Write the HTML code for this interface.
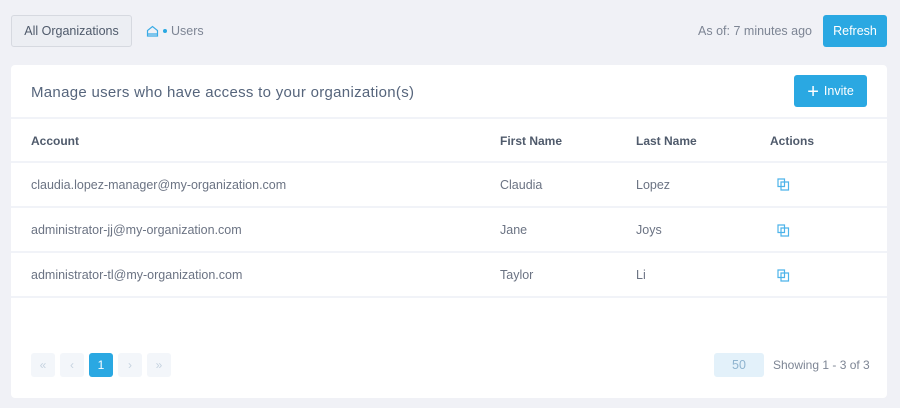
<!DOCTYPE html>
<html><head><style>
*{box-sizing:border-box;margin:0;padding:0}
body{width:900px;height:408px;background:#f0f1f6;font-family:"Liberation Sans",sans-serif;color:#5a6478;position:relative;overflow:hidden}
.abs{position:absolute}
.allorg{left:11px;top:15px;width:121px;height:32px;border:1px solid #d6d9e0;border-radius:3px;background:#eceef3;font-size:12.5px;color:#4f5a6b;text-align:center;line-height:30px}
.crumb{left:146px;top:24px;font-size:12.5px;color:#7d8594;display:flex;align-items:center;gap:4px}
.asof{right:88px;top:24px;font-size:12.5px;color:#7d8594;white-space:nowrap}
.btn{background:#2aa8e2;color:#fff;border-radius:3px;font-size:12.5px;text-align:center}
.card{left:11px;top:65px;width:876px;height:333px;background:#fff;border-radius:4px}
.title{left:31px;top:84px;font-size:15px;color:#56657c;letter-spacing:0.3px}
.line{left:11px;width:876px;height:2px;background:#f1f3f8}
.th{font-size:12px;font-weight:bold;color:#4f5a6b;top:134px}
.td{font-size:12.5px;color:#6b7383}
.pg{width:24px;height:24px;top:353px;border-radius:3px;background:#f3f6fa;color:#c6d3e0;font-size:12px;text-align:center;line-height:24px}
</style></head><body>
<div class="abs allorg">All Organizations</div>
<div class="abs crumb"><svg width="13" height="12" viewBox="0 0 13 12"><path d="M1.5 11V5.5L6.5 1.5L11.5 5.5V11Z M1.5 9H11.5" fill="none" stroke="#3aabe5" stroke-width="1.2"/></svg><span style="width:4px;height:4px;border-radius:2px;background:#2aa8e2;display:inline-block"></span><span>Users</span></div>
<div class="abs asof">As of: 7 minutes ago</div>
<div class="abs btn" style="left:823px;top:15px;width:64px;height:32px;line-height:32px">Refresh</div>
<div class="abs card"></div>
<div class="abs title">Manage users who have access to your organization(s)</div>
<div class="abs btn" style="left:794px;top:75px;width:73px;height:32px;line-height:32px;font-size:12.5px"><span style="font-size:20px;vertical-align:-3px;margin-right:5px">+</span>Invite</div>
<div class="abs line" style="top:117px"></div>
<div class="abs th" style="left:31px">Account</div>
<div class="abs th" style="left:500px">First Name</div>
<div class="abs th" style="left:636px">Last Name</div>
<div class="abs th" style="left:770px">Actions</div>
<div class="abs line" style="top:161px"></div>
<div class="abs line" style="top:206px"></div>
<div class="abs line" style="top:251px"></div>
<div class="abs line" style="top:296px"></div>
<div class="abs td" style="left:31px;top:178px">claudia.lopez-manager@my-organization.com</div>
<div class="abs td" style="left:500px;top:178px">Claudia</div>
<div class="abs td" style="left:636px;top:178px">Lopez</div>
<div class="abs td" style="left:31px;top:223px">administrator-jj@my-organization.com</div>
<div class="abs td" style="left:500px;top:223px">Jane</div>
<div class="abs td" style="left:636px;top:223px">Joys</div>
<div class="abs td" style="left:31px;top:268px">administrator-tl@my-organization.com</div>
<div class="abs td" style="left:500px;top:268px">Taylor</div>
<div class="abs td" style="left:636px;top:268px">Li</div>
<svg class="abs" style="left:777px;top:178px" width="13" height="13" viewBox="0 0 13 13"><path d="M1 1H7.5V8.5H1Z M4 4H11.5V12H4Z" fill="#fff" stroke="#4db3ea" stroke-width="1.2"/></svg>
<svg class="abs" style="left:777px;top:224px" width="13" height="13" viewBox="0 0 13 13"><path d="M1 1H7.5V8.5H1Z M4 4H11.5V12H4Z" fill="#fff" stroke="#4db3ea" stroke-width="1.2"/></svg>
<svg class="abs" style="left:777px;top:269px" width="13" height="13" viewBox="0 0 13 13"><path d="M1 1H7.5V8.5H1Z M4 4H11.5V12H4Z" fill="#fff" stroke="#4db3ea" stroke-width="1.2"/></svg>
<div class="abs pg" style="left:31px">«</div>
<div class="abs pg" style="left:60px">‹</div>
<div class="abs pg" style="left:89px;background:#2aa8e2;color:#fff">1</div>
<div class="abs pg" style="left:118px">›</div>
<div class="abs pg" style="left:147px">»</div>
<div class="abs" style="left:714px;top:353px;width:50px;height:24px;background:#e3f1fa;border-radius:3px;color:#8fb4cf;font-size:12.5px;text-align:center;line-height:24px">50</div>
<div class="abs td" style="left:773px;top:358px;color:#7d8594;font-size:12px">Showing 1 - 3 of 3</div>
</body></html>
